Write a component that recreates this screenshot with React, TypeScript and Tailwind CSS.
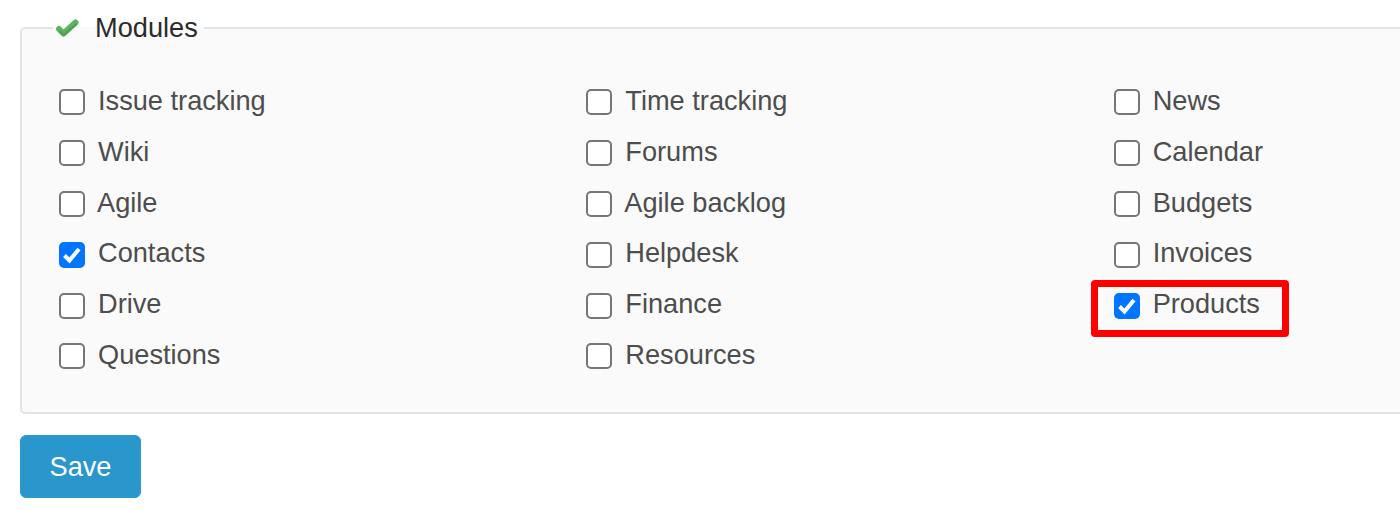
const modules = [
  { name: "Issue tracking" }, { name: "Time tracking" }, { name: "News" },
  { name: "Wiki" }, { name: "Forums" }, { name: "Calendar" },
  { name: "Agile", tight: true }, { name: "Agile backlog", tight: true }, { name: "Budgets" },
  { name: "Contacts", checked: true }, { name: "Helpdesk" }, { name: "Invoices" },
  { name: "Drive" }, { name: "Finance" }, { name: "Products", checked: true, marked: true },
  { name: "Questions" }, { name: "Resources" },
];

const App = () => {
  return (
    <div className="h-[510px] w-[1400px] overflow-hidden bg-white font-['Liberation_Sans',Arial,sans-serif]">
      <div className="pl-[20px] pt-[12px]">
        <fieldset className="h-[402px] w-[1400px] rounded-[5px] border-2 border-[#e4e4e4] bg-[#fafafa] pl-[37px]">
          <legend className="ml-[-6px] flex h-[32px] items-center px-[2px] pr-[6px] text-[27.2px] leading-[32px] text-[#2b2b2b]">
            <svg viewBox="0 0 24 20" className="mr-[16px] h-[20px] w-[24px]" aria-hidden="true">
              <path d="M4 11 L8.5 15.5 L20.5 4.5" fill="none" stroke="#5ab55e" strokeWidth="6" strokeLinecap="round" strokeLinejoin="round" />
              <path d="M5 13.5 L8.5 17 L21 6.5" fill="none" stroke="#4b9f50" strokeWidth="2" strokeLinecap="round" strokeLinejoin="round" />
            </svg>
            Modules
          </legend>
          <div className="grid w-[1582px] grid-cols-3 pt-[33px]">
            {modules.map(m => (
              <label key={m.name} className={`relative flex h-[50.8px] items-center text-[27.2px] text-[#4d4d4d] ${m.tight ? "gap-[12px]" : "gap-[13px]"}`}>
                {m.checked ? (
                  <span className="flex h-[26px] w-[26px] shrink-0 items-center justify-center rounded-[5px] bg-[#0075ff]">
                    <svg viewBox="0 0 26 26" className="h-[26px] w-[26px]" aria-hidden="true">
                      <path d="M5.5 13.5 L10.5 18.5 L20 7" fill="none" stroke="#fff" strokeWidth="4" />
                    </svg>
                  </span>
                ) : (
                  <span className="h-[26px] w-[26px] shrink-0 rounded-[5px] border-2 border-[#767676] bg-white" />
                )}
                <span className="mt-[-2px]">{m.name}</span>
                {m.marked && (
                  <span className="absolute left-[-23px] top-0 h-[57px] w-[198px] rounded-[4px] border-[7px] border-[#ff0000]" />
                )}
              </label>
            ))}
          </div>
        </fieldset>
        <button className="mt-[21px] h-[63px] w-[121px] rounded-[6px] border border-[#2e9ad0] bg-[#2996cc] pt-[1px] text-[27.2px] text-white">
          Save
        </button>
      </div>
    </div>
  );
};

export default App;
